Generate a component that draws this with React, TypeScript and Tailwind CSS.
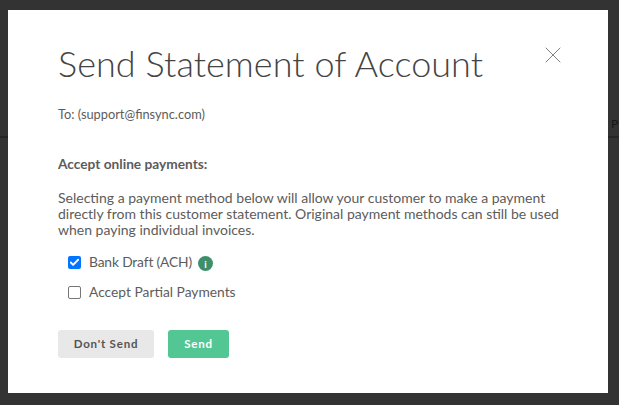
import React from 'react';
import { X, Check } from 'lucide-react';

export default function App() {
  return (
    <div className="relative h-[405px] w-[619px] overflow-hidden bg-[#333333] font-['Lato',sans-serif]">
      {/* page behind the overlay */}
      <div className="absolute left-0 top-[136px] h-[2px] w-full bg-[#24272b]" />
      <span className="absolute left-[611px] top-[115px] text-[12px] font-medium text-[#15181c]">P</span>

      <div className="absolute left-2 top-2.5 flex h-[383px] w-[600px] flex-col bg-white pl-[50px] pr-[41px] pt-[31px] text-[#5c5c5c]">
        <div className="flex items-start justify-between">
          <h1 className="text-[36px] font-light leading-[44px] tracking-[0.05px] text-[#444444]">
            Send Statement of Account
          </h1>
          <button className="text-[#777777]">
            <X size={28} strokeWidth={0.8} />
          </button>
        </div>

        <p className="mt-[20px] text-[12.8px] leading-[18px]">To: (support@finsync.com)</p>
        <p className="mt-[32px] text-[13.7px] font-bold leading-[18px]">Accept online payments:</p>
        <p className="mt-[17px] text-[14px] leading-[16px]">
          Selecting a payment method below will allow your customer to make a payment directly from this customer
          statement. Original payment methods can still be used when paying individual invoices.
        </p>

        <div className="ml-[10px] mt-[15px] flex flex-col gap-[12px] text-[13.8px] leading-[18px]">
          <label className="flex items-center gap-[8px]">
            <span className="flex h-[13px] w-[13px] items-center justify-center rounded-[2px] bg-[#0075ff] text-white">
              <Check size={11} strokeWidth={4} />
            </span>
            <span className="tracking-[-0.15px]">Bank Draft (ACH)</span>
            <span className="mt-[3px] ml-[-2px] flex h-[15px] w-[15px] items-center justify-center rounded-full bg-[#3f8f6b] text-[10px] font-bold leading-none text-white">
              i
            </span>
          </label>
          <label className="flex items-center gap-[8px]">
            <span className="h-[13px] w-[13px] rounded-[2px] border border-[#767676]" />
            <span>Accept Partial Payments</span>
          </label>
        </div>

        <div className="mt-[29px] flex gap-[14px] text-[11.5px] font-bold leading-none tracking-[0.8px]">
          <button className="h-[28px] w-[96px] rounded-[3px] bg-[#e8e8e8] text-[#555555]">Don't Send</button>
          <button className="h-[28px] w-[61px] rounded-[3px] bg-[#52c794] text-white">Send</button>
        </div>
      </div>
    </div>
  );
}
